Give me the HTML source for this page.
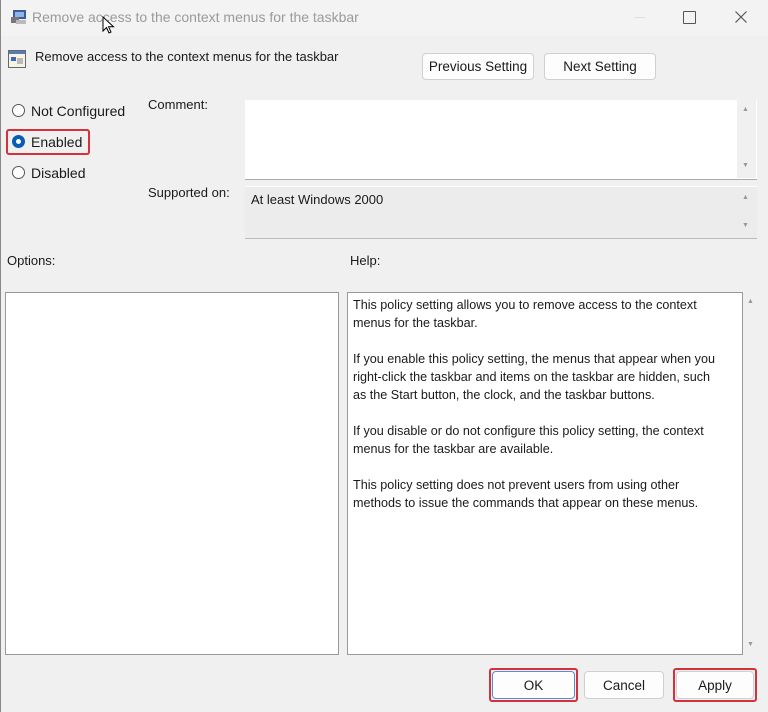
<!DOCTYPE html>
<html><head><style>
body{margin:0;width:768px;height:712px;background:#f0f0f0;font-family:"Liberation Sans",sans-serif;font-size:13px;color:#1a1a1a;position:relative;overflow:hidden}
.a{position:absolute;white-space:nowrap}
.btn{position:absolute;background:#fdfdfd;border:1px solid #d0d0d0;border-radius:4px;text-align:center;box-sizing:border-box;font-size:13.5px}
.red{position:absolute;border:2.5px solid #d3323c;border-radius:3px;box-sizing:border-box}
.rad{position:absolute;width:13px;height:13px;border:1px solid #555;border-radius:50%;box-sizing:border-box;background:#fff}
.sb{position:absolute;color:#999;font-size:7px}
</style></head><body>
<div class="a" style="left:0;top:0;width:768px;height:36px;background:#f3f3f3"></div>
<div class="a" style="left:0;top:0;width:1px;height:712px;background:#888"></div>
<svg class="a" style="left:10px;top:9px" width="18" height="16"><rect x="3" y="1" width="13" height="9" fill="#3a5c9c"/><rect x="5" y="3" width="9" height="5" fill="#8fb4e8"/><rect x="1" y="8" width="8" height="6" fill="#777"/><rect x="6" y="11" width="10" height="4" fill="#bbb"/></svg>
<div class="a" style="left:32px;top:9px;color:#9a9a9a;font-size:14px">Remove access to the context menus for the taskbar</div>
<svg class="a" style="left:102px;top:16px" width="14" height="20"><path d="M1 1 L1 15 L4.5 11.5 L7 17 L9 16 L6.6 10.8 L11.5 10.8 Z" fill="#fff" stroke="#000" stroke-width="1"/></svg>
<div class="a" style="left:634px;top:17px;width:11px;height:1px;background:#ddd"></div>
<div class="a" style="left:683px;top:11px;width:11px;height:11px;border:1px solid #555;border-radius:1px"></div>
<svg class="a" style="left:735px;top:11px" width="12" height="12"><path d="M0.5 0.5L11.5 11.5M11.5 0.5L0.5 11.5" stroke="#555" stroke-width="1.2"/></svg>
<svg class="a" style="left:8px;top:50px" width="19" height="19"><rect x="0.5" y="0.5" width="17" height="17" fill="#f8f4e4" stroke="#667"/><rect x="1" y="1" width="16" height="3" fill="#5a7ab0"/><rect x="3" y="7" width="5" height="4" fill="#3a6ac0"/><rect x="9" y="8" width="6" height="6" fill="#bbb"/></svg>
<div class="a" style="left:35px;top:49px;font-size:13px">Remove access to the context menus for the taskbar</div>
<div class="btn" style="left:422px;top:53px;width:112px;height:27px;line-height:25px">Previous Setting</div>
<div class="btn" style="left:544px;top:53px;width:112px;height:27px;line-height:25px">Next Setting</div>
<div class="rad" style="left:12px;top:104px"></div><div class="a" style="left:31px;top:103px;font-size:14px">Not Configured</div>
<div class="rad" style="left:12px;top:135px;border:4px solid #0a5bb5"></div><div class="a" style="left:31px;top:134px;font-size:14px">Enabled</div>
<div class="red" style="left:6px;top:129px;width:84px;height:26px"></div>
<div class="rad" style="left:12px;top:166px"></div><div class="a" style="left:31px;top:165px;font-size:14px">Disabled</div>
<div class="a" style="left:148px;top:97px">Comment:</div>
<div class="a" style="left:245px;top:100px;width:512px;height:79px;background:#fff;border-bottom:1px solid #aaa"></div>
<div class="a" style="left:737px;top:100px;width:19px;height:78px;background:#f0f0f0"></div>
<div class="sb" style="left:742px;top:106px">▲</div><div class="sb" style="left:742px;top:162px">▼</div>
<div class="a" style="left:148px;top:185px">Supported on:</div>
<div class="a" style="left:245px;top:186px;width:512px;height:51px;background:#ececec;border-top:1px solid #fff;border-bottom:1px solid #bbb"></div>
<div class="a" style="left:251px;top:192px">At least Windows 2000</div>
<div class="sb" style="left:742px;top:194px">▲</div><div class="sb" style="left:742px;top:222px">▼</div>
<div class="a" style="left:7px;top:253px">Options:</div>
<div class="a" style="left:350px;top:253px">Help:</div>
<div class="a" style="left:5px;top:292px;width:334px;height:363px;background:#fff;border:1px solid #999;box-sizing:border-box"></div>
<div class="a" style="left:347px;top:292px;width:396px;height:363px;background:#fff;border:1px solid #999;box-sizing:border-box"></div>
<div class="sb" style="left:747px;top:298px">▲</div><div class="sb" style="left:747px;top:641px">▼</div>
<div class="a" style="left:353px;top:296px;line-height:18px;font-size:12.6px">This policy setting allows you to remove access to the context<br>menus for the taskbar.<br><br>If you enable this policy setting, the menus that appear when you<br>right-click the taskbar and items on the taskbar are hidden, such<br>as the Start button, the clock, and the taskbar buttons.<br><br>If you disable or do not configure this policy setting, the context<br>menus for the taskbar are available.<br><br>This policy setting does not prevent users from using other<br>methods to issue the commands that appear on these menus.</div>
<div class="btn" style="left:492px;top:671px;width:83px;height:28px;line-height:27px;border-color:#5a8ad0">OK</div>
<div class="red" style="left:489px;top:668px;width:89px;height:34px"></div>
<div class="btn" style="left:584px;top:671px;width:80px;height:28px;line-height:27px">Cancel</div>
<div class="btn" style="left:676px;top:671px;width:78px;height:28px;line-height:27px">Apply</div>
<div class="red" style="left:673px;top:668px;width:84px;height:34px"></div>
</body></html>
